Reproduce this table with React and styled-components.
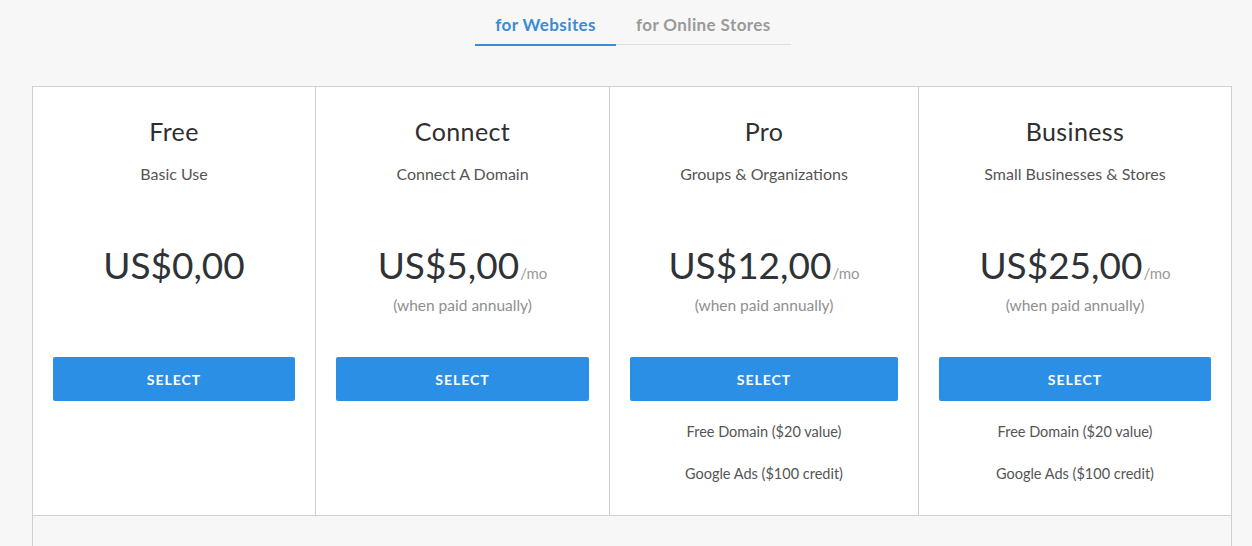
import React from 'react';
import styled, {createGlobalStyle} from 'styled-components';

const GlobalStyle = createGlobalStyle`
  body {
    margin: 0;
    background: #f7f7f7;
    font-family: 'Lato', 'Open Sans', sans-serif;
    color: #333;
  }
`

const Page = styled.div`
  width: 1252px;
  height: 546px;
  overflow: hidden;
  display: flex;
  flex-direction: column;
  align-items: center;
`

const Tabs = styled.div`
  display: flex;
  margin-top: 10px;
  margin-left: 14px;
`

const Tab = styled.div`
  font-family: 'Lato', sans-serif;
  font-weight: 700;
  font-size: 17px;
  letter-spacing: 0.4px;
  color: ${p => p.active ? '#3a8bd6' : '#9a9a9a'};
  padding: 4px 20px 10px 20px;
  border-bottom: ${p => p.active ? '2px solid #3a8bd6' : '1px solid #dedede'};
  height: 20px;
  box-sizing: content-box;
  margin-bottom: ${p => p.active ? '0' : '1px'};
`

const Table = styled.div`
  margin-top: 40px;
  align-self: flex-start;
  margin-left: 32px;
  width: 1198px;
  border-left: 1px solid #cfcfcf;
  border-right: 1px solid #cfcfcf;
  border-top: 1px solid #cfcfcf;
`

const Row = styled.div`
  display: grid;
  grid-template-columns: 282px 294px 309px 1fr;
  background: #fff;
  border-bottom: 1px solid #cfcfcf;
`

const Column = styled.div`
  display: flex;
  flex-direction: column;
  align-items: center;
  padding: 0 20px 0 20px;
  height: 428px;
  border-left: ${p => p.first ? 'none' : '1px solid #cfcfcf'};
`

const Title = styled.h2`
  margin: 29px 0 0;
  font-family: 'Lato', sans-serif;
  font-weight: 400;
  font-size: 25px;
  letter-spacing: 0.4px;
  color: #2f2f2f;
  line-height: 30px;
`

const Subtitle = styled.div`
  margin-top: 18px;
  font-size: 16px;
  color: #555;
  line-height: 20px;
`

const Price = styled.div`
  margin-top: 59px;
  font-size: 37px;
  color: #2f3337;
  line-height: 44px;
  height: 44px;
  white-space: nowrap;
`

const Per = styled.span`
  font-size: 15px;
  color: #999;
  margin-left: 1px;
`

const Note = styled.div`
  margin-top: 9px;
  height: 18px;
  font-size: 15.5px;
  color: #8f8f8f;
  line-height: 18px;
`

const Button = styled.button`
  margin-top: 43px;
  width: 100%;
  height: 44px;
  border: none;
  border-radius: 2px;
  background: #2b8fe6;
  color: #fff;
  font-family: 'Lato', sans-serif;
  font-weight: 700;
  font-size: 14px;
  letter-spacing: 1px;
`

const Feature = styled.div`
  font-size: 14.5px;
  color: #555;
  line-height: 18px;
  margin-top: ${p => p.first ? '22px' : '24px'};
`

const Footer = styled.div`
  height: 40px;
  background: #f7f7f7;
`

const plans = [
  {name: 'Free', sub: 'Basic Use', price: 'US$0,00', monthly: false, features: []},
  {name: 'Connect', sub: 'Connect A Domain', price: 'US$5,00', monthly: true, features: []},
  {name: 'Pro', sub: 'Groups & Organizations', price: 'US$12,00', monthly: true,
    features: ['Free Domain ($20 value)', 'Google Ads ($100 credit)']},
  {name: 'Business', sub: 'Small Businesses & Stores', price: 'US$25,00', monthly: true,
    features: ['Free Domain ($20 value)', 'Google Ads ($100 credit)']},
];

export default function App() {
  return (
    <Page>
      <GlobalStyle />
      <Tabs>
        <Tab active>for Websites</Tab>
        <Tab>for Online Stores</Tab>
      </Tabs>
      <Table>
        <Row>
          {plans.map((plan, i) => (
            <Column key={plan.name} first={i === 0}>
              <Title>{plan.name}</Title>
              <Subtitle>{plan.sub}</Subtitle>
              <Price>
                {plan.price}
                {plan.monthly && <Per>/mo</Per>}
              </Price>
              <Note>{plan.monthly ? '(when paid annually)' : ''}</Note>
              <Button>SELECT</Button>
              {plan.features.map((f, j) => (
                <Feature key={f} first={j === 0}>{f}</Feature>
              ))}
            </Column>
          ))}
        </Row>
        <Footer />
      </Table>
    </Page>
  )
}
